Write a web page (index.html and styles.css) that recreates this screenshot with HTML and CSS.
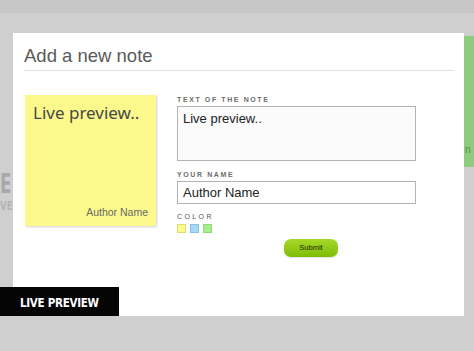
FILE: index.html
```html
<!DOCTYPE html>
<html>
<head>
<meta charset="utf-8">
<link rel="stylesheet" href="styles.css">
</head>
<body>
<div class="topbar"></div>
<div class="bg-text"><span class="big">E</span><span class="small">VE</span></div>
<div class="bg-green"><span>n</span></div>
<div class="modal">
  <h1 class="title">Add a new note</h1>
  <div class="content">
    <div class="note">
      <div class="note-text">Live preview..</div>
      <div class="note-author">Author Name</div>
    </div>
    <form class="form">
      <label class="label">Text of the note</label>
      <div class="textarea">Live preview..</div>
      <label class="label">Your name</label>
      <div class="input">Author Name</div>
      <label class="label label-color">Color</label>
      <div class="swatches">
        <span class="swatch yellow"></span>
        <span class="swatch blue"></span>
        <span class="swatch green"></span>
      </div>
      <div class="actions"><span class="submit">Submit</span></div>
    </form>
  </div>
</div>
<div class="banner"><span class="banner-text">LIVE PREVIEW</span></div>
</body>
</html>
```
FILE: styles.css
```css
html, body {
  margin: 0;
  padding: 0;
}
body {
  background: #cfcfcf;
  width: 474px;
  height: 351px;
  overflow: hidden;
  position: relative;
  font-family: "Liberation Sans", Arial, sans-serif;
}
.topbar {
  height: 13px;
  background: #c6c6c6;
}
.bg-text {
  position: absolute;
  left: 0;
  top: 170px;
  color: #a9a9a9;
  font-family: "DejaVu Sans", sans-serif;
  font-weight: bold;
  line-height: 1;
}
.bg-text .big {
  display: block;
  font-size: 27px;
  transform: scaleX(0.62);
  transform-origin: left center;
}
.bg-text .small {
  display: block;
  font-size: 12px;
  margin-top: 3px;
  color: #b5b5b5;
  transform: scaleX(0.72);
  transform-origin: left center;
}
.bg-green {
  position: absolute;
  left: 455px;
  top: 36px;
  width: 19px;
  height: 131px;
  background: #8dcb7e;
}
.bg-green span {
  position: absolute;
  left: 10px;
  top: 108px;
  font-size: 10px;
  color: #5f8d55;
}
.modal {
  position: relative;
  margin: 20px 0 0 13px;
  width: 451px;
  height: 283px;
  background: #fff;
  box-sizing: border-box;
  padding: 12px 10px 0 11px;
}
.title {
  margin: 0;
  font-weight: normal;
  font-size: 18.5px;
  color: #5a5a5a;
  line-height: 22px;
  padding-bottom: 3px;
  border-bottom: 1px solid #e3e3e3;
}
.content {
  display: flex;
  margin-top: 24px;
}
.note {
  margin-left: 1px;
  width: 131px;
  height: 131px;
  background: #fbf98c;
  box-shadow: 1px 1px 2px rgba(0,0,0,0.18);
  display: flex;
  flex-direction: column;
  justify-content: space-between;
  box-sizing: border-box;
  padding: 8px 8px 8px 8px;
}
.note-text {
  font-family: "Noto Sans", "Open Sans", sans-serif;
  font-size: 17px;
  color: #474747;
  line-height: 20px;
}
.note-author {
  text-align: right;
  font-size: 10.5px;
  color: #6a6a6a;
}
.form {
  margin: 0 0 0 21px;
  width: 239px;
  display: flex;
  flex-direction: column;
}
.label {
  font-size: 7px;
  font-weight: bold;
  letter-spacing: 1.6px;
  text-transform: uppercase;
  color: #6c6c6c;
  line-height: 9px;
  margin-top: 0;
  margin-bottom: 2px;
}
.textarea, .input {
  border: 1px solid #b3b3b3;
  background: #fbfbfb;
  font-size: 13px;
  color: #222;
  box-sizing: border-box;
  padding: 4px 5px;
  line-height: 15px;
}
.textarea {
  height: 55px;
  margin-bottom: 9px;
}
.input {
  height: 23px;
  padding: 3px 5px;
  margin-bottom: 8px;
  background: #fff;
}
.label-color {
  letter-spacing: 2.4px;
  font-weight: normal;
  color: #555;
}
.swatches {
  display: flex;
  gap: 4px;
  margin-top: 1px;
}
.swatch {
  width: 9px;
  height: 9px;
  box-sizing: border-box;
  border: 1px solid rgba(0,0,0,0.12);
}
.swatch.yellow { background: #fbfb8a; border-color: #e0dc7a; }
.swatch.blue { background: #a7d8f6; border-color: #8cc0de; }
.swatch.green { background: #a8ee8c; border-color: #90d87a; }
.actions {
  display: flex;
  justify-content: center;
  margin-top: 6px;
}
.submit {
  width: 54px;
  height: 18px;
  border-radius: 7px;
  background: linear-gradient(#a6d82a, #7fbd06);
  box-shadow: 0 1px 1px rgba(0,0,0,0.12);
  font-size: 7.5px;
  color: #1f2a00;
  text-align: center;
  line-height: 18px;
  margin-left: 29px;
}
.banner {
  position: absolute;
  left: 0;
  top: 287px;
  width: 119px;
  height: 29px;
  background: #050505;
  color: #fff;
  box-sizing: border-box;
  padding-left: 20px;
  line-height: 29px;
}
.banner-text {
  display: inline-block;
  font-family: "DejaVu Sans", sans-serif;
  font-weight: bold;
  font-size: 13px;
  letter-spacing: -0.4px;
  transform: scaleX(0.8);
  transform-origin: left center;
}
```
